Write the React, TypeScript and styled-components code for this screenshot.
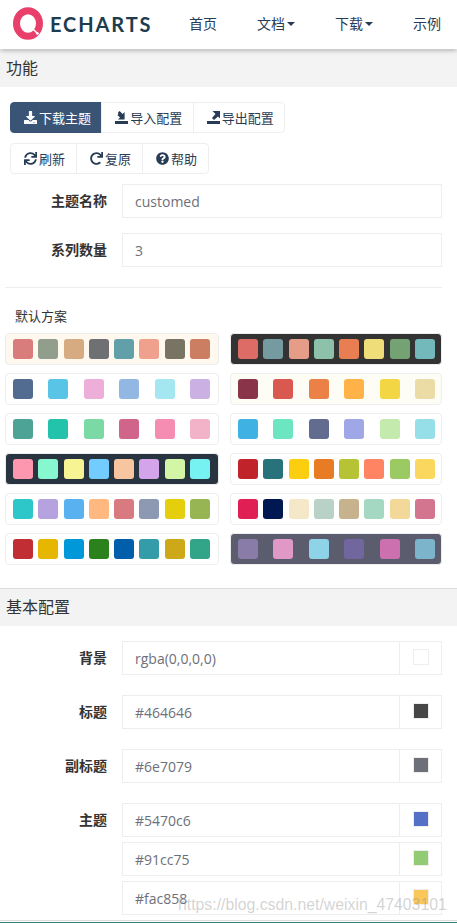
import React from 'react';
import styled, { createGlobalStyle } from 'styled-components';
import { FaDownload, FaQuestionCircle, FaRedo, FaSync } from 'react-icons/fa';

const GlobalStyle = createGlobalStyle`
    html, body {
        margin: 0;
        padding: 0;
        background: #fff;
    }
    body {
        font-family: "Open Sans", "Noto Sans CJK SC", sans-serif;
        font-size: 14px;
        color: #333;
    }
`;

const Page = styled.div`
    position: relative;
    width: 457px;
    height: 923px;
    overflow: hidden;
`;

const Navbar = styled.header`
    position: relative;
    z-index: 2;
    display: flex;
    align-items: center;
    height: 49px;
    background: #fff;
    box-shadow: 0 1px 5px rgba(0, 0, 0, 0.35);
`;

const Brand = styled.div`
    display: flex;
    align-items: center;
    gap: 6px;
    width: 169px;
    padding: 0 0 2px 12px;
    box-sizing: border-box;
    flex: none;
`;

const BrandName = styled.span`
    font-family: "Lato", "Liberation Sans", sans-serif;
    font-weight: 700;
    font-size: 20px;
    letter-spacing: 1.9px;
    color: #1d3c4e;
    line-height: 1;
`;

const NavList = styled.nav`
    display: flex;
    gap: 40px;
    padding: 0 0 3px 20px;
    white-space: nowrap;
`;

const NavItem = styled.span`
    display: flex;
    align-items: center;
    font-size: 14px;
    color: #293c55;
`;

const Caret = styled.i`
    width: 0;
    height: 0;
    margin: 2px 0 0 2px;
    border-top: 4px solid #293c55;
    border-left: 4px solid transparent;
    border-right: 4px solid transparent;
`;

const SectionTitle = styled.h2<{ $ruled?: boolean }>`
    margin: 0;
    height: 37px;
    padding-left: 6px;
    line-height: 37px;
    font-size: 16px;
    font-weight: 400;
    color: #333;
    background: #f3f3f3;
    border-top: ${(p) => (p.$ruled ? '1px solid #ddd' : 'none')};
    margin-top: ${(p) => (p.$ruled ? '23px' : '1px')};
`;

const Toolbar = styled.div`
    display: flex;
    flex-direction: column;
    align-items: flex-start;
    gap: 10px;
    padding: 15px 0 10px 10px;
`;

const ButtonGroup = styled.div`
    display: flex;
    height: 31px;
`;

const ToolButton = styled.button<{ $active?: boolean; $small?: boolean }>`
    display: flex;
    align-items: center;
    gap: 2px;
    height: 31px;
    margin: 0 0 0 -1px;
    padding: 0 ${(p) => (p.$small ? '11px' : '10.3px')} 0 13px;
    font-family: inherit;
    font-size: 13px;
    white-space: nowrap;
    color: ${(p) => (p.$active ? '#fff' : '#293c55')};
    background: ${(p) => (p.$active ? '#3a5476' : '#fff')};
    border: 1px solid ${(p) => (p.$active ? '#3a5476' : '#eee')};

    &:first-child {
        margin-left: 0;
        border-radius: 4px 0 0 4px;
    }
    &:last-child {
        border-radius: 0 4px 4px 0;
    }
    svg {
        width: 13px;
        height: 13px;
        flex: none;
    }
`;

const FormRow = styled.div<{ $wide?: boolean }>`
    display: grid;
    grid-template-columns: 107px 320px;
    column-gap: 15px;
    margin-bottom: ${(p) => (p.$wide ? '20px' : '15px')};
`;

const RowLabel = styled.label`
    font-weight: 700;
    font-size: 14px;
    line-height: 34px;
    text-align: right;
    color: #333;
`;

const FieldStack = styled.div`
    display: flex;
    flex-direction: column;
    gap: 5px;
`;

const Field = styled.div`
    display: flex;
    height: 34px;
    box-sizing: border-box;
    border: 1px solid #eee;
    background: #fff;
`;

const FieldText = styled.span`
    flex: 1;
    padding: 1px 0 0 12px;
    line-height: 32px;
    font-size: 14px;
    color: #6e7079;
`;

const ColorAddon = styled.span`
    display: flex;
    align-items: center;
    justify-content: center;
    width: 41px;
    flex: none;
    border-left: 1px solid #eee;
`;

const ColorChip = styled.i<{ $color: string }>`
    display: block;
    width: 14px;
    height: 14px;
    margin-top: -2px;
    background: ${(p) => p.$color};
    border: 1px solid #eee;
`;

const Divider = styled.hr`
    margin: 20px 15px 0 5px;
    border: 0;
    border-top: 1px solid #eee;
`;

const SchemeHeading = styled.div`
    padding: 19px 0 0 15px;
    height: 26px;
    font-size: 13px;
    line-height: 19px;
    color: #333;
`;

const SchemeGrid = styled.div`
    display: grid;
    grid-template-columns: 214px 212px;
    column-gap: 11px;
    row-gap: 8px;
    padding-left: 5px;
`;

const SchemeCard = styled.div<{ $bg: string }>`
    padding: 5px 0 5px 7px;
    border: 1px solid #eee;
    border-radius: 4px;
    background: ${(p) => p.$bg};
`;

const SwatchRow = styled.div`
    display: flex;
    justify-content: space-between;
    width: 197px;
`;

const Swatch = styled.i<{ $color: string }>`
    display: block;
    width: 20px;
    height: 20px;
    border-radius: 3px;
    background: ${(p) => p.$color};
`;

const ConfigList = styled.div`
    padding-top: 15px;
`;

const BottomEdge = styled.div`
    position: absolute;
    left: 0;
    right: 0;
    top: 920px;
    height: 3px;
    box-sizing: border-box;
    border-top: 1px solid #ddd;
    border-bottom: 1px solid #2f7f7b;
`;

const Watermark = styled.div`
    position: absolute;
    left: 178px;
    top: 894px;
    font-family: "Liberation Sans", sans-serif;
    font-size: 15.8px;
    line-height: 22px;
    white-space: nowrap;
    color: rgba(150, 150, 150, 0.42);
`;

const EchartsMark = () => (
    <svg width="32" height="34" viewBox="0 0 32 34">
        <ellipse cx="16" cy="16.500" rx="11.500" ry="12.800" fill="none" stroke="#e8406a" strokeWidth="7" />
        <path d="M21 22l5 5" stroke="#fff" strokeWidth="1.500" />
        <circle cx="25.500" cy="26.500" r="1.300" fill="#fff" />
    </svg>
);

const ImportIcon = () => (
    <svg viewBox="0 0 13 13" fill="currentColor">
        <path d="M0 10h13v3H0z" />
        <path d="M3 1.500l1.600-1.500 3 3 2-2V8.500H3l2-2-2.600-2.600 1-1z" />
    </svg>
);

const ExportIcon = () => (
    <svg viewBox="0 0 13 13" fill="currentColor">
        <path d="M0 10h13v3H0z" />
        <path d="M5.500 0H13v7.500l-2-2-4 3.500-2-2 3.500-4z" />
    </svg>
);

const schemes: { bg: string; colors: string[] }[] = [
    { bg: '#fef8ef', colors: ['#d87c7c', '#919e8b', '#d7ab82', '#6e7074', '#61a0a8', '#efa18d', '#787464', '#cc7e63'] },
    { bg: '#333333', colors: ['#dd6b66', '#759aa0', '#e69d87', '#8dc1a9', '#ea7e53', '#eedd78', '#73a373', '#73b9bc'] },
    { bg: '#ffffff', colors: ['#516b91', '#59c4e6', '#edafda', '#93b7e3', '#a5e7f0', '#cbb0e3'] },
    { bg: '#fdfcf5', colors: ['#893448', '#d95850', '#eb8146', '#ffb248', '#f2d643', '#ebdba4'] },
    { bg: '#ffffff', colors: ['#4ea397', '#22c3aa', '#7bd9a5', '#d0648a', '#f58db2', '#f2b3c9'] },
    { bg: '#ffffff', colors: ['#3fb1e3', '#6be6c1', '#626c91', '#a0a7e6', '#c4ebad', '#96dee8'] },
    { bg: '#293441', colors: ['#fc97af', '#87f7cf', '#f7f494', '#72ccff', '#f7c5a0', '#d4a4eb', '#d2f5a6', '#76f2f2'] },
    { bg: '#ffffff', colors: ['#c1232b', '#27727b', '#fcce10', '#e87c25', '#b5c334', '#fe8463', '#9bca63', '#fad860'] },
    { bg: '#ffffff', colors: ['#2ec7c9', '#b6a2de', '#5ab1ef', '#ffb980', '#d87a80', '#8d98b3', '#e5cf0d', '#97b552'] },
    { bg: '#ffffff', colors: ['#e01f54', '#001852', '#f5e8c8', '#b8d2c7', '#c6b38e', '#a4d8c2', '#f3d999', '#d3758f'] },
    { bg: '#ffffff', colors: ['#c12e34', '#e6b600', '#0098d9', '#2b821d', '#005eaa', '#339ca8', '#cda819', '#32a487'] },
    { bg: '#5b5c6e', colors: ['#8a7ca8', '#e098c7', '#8fd3e8', '#71669e', '#cc70af', '#7cb4cc'] },
];

const configRows: { label: string; values: { text: string; color: string }[] }[] = [
    { label: '背景', values: [{ text: 'rgba(0,0,0,0)', color: 'transparent' }] },
    { label: '标题', values: [{ text: '#464646', color: '#464646' }] },
    { label: '副标题', values: [{ text: '#6e7079', color: '#6e7079' }] },
    {
        label: '主题',
        values: [
            { text: '#5470c6', color: '#5470c6' },
            { text: '#91cc75', color: '#91cc75' },
            { text: '#fac858', color: '#fac858' },
        ],
    },
];

const App: React.FC = () => (
    <Page>
        <GlobalStyle />
        <Navbar>
            <Brand>
                <EchartsMark />
                <BrandName>ECHARTS</BrandName>
            </Brand>
            <NavList>
                <NavItem>首页</NavItem>
                <NavItem>文档<Caret /></NavItem>
                <NavItem>下载<Caret /></NavItem>
                <NavItem>示例</NavItem>
            </NavList>
        </Navbar>

        <SectionTitle>功能</SectionTitle>
        <Toolbar>
            <ButtonGroup>
                <ToolButton $active><FaDownload />下载主题</ToolButton>
                <ToolButton><ImportIcon />导入配置</ToolButton>
                <ToolButton><ExportIcon />导出配置</ToolButton>
            </ButtonGroup>
            <ButtonGroup>
                <ToolButton $small><FaSync />刷新</ToolButton>
                <ToolButton $small><FaRedo />复原</ToolButton>
                <ToolButton $small><FaQuestionCircle />帮助</ToolButton>
            </ButtonGroup>
        </Toolbar>

        <FormRow>
            <RowLabel>主题名称</RowLabel>
            <Field><FieldText>customed</FieldText></Field>
        </FormRow>
        <FormRow>
            <RowLabel>系列数量</RowLabel>
            <Field><FieldText>3</FieldText></Field>
        </FormRow>
        <Divider />
        <SchemeHeading>默认方案</SchemeHeading>
        <SchemeGrid>
            {schemes.map((scheme) => (
                <SchemeCard key={scheme.colors[0]} $bg={scheme.bg}>
                    <SwatchRow>
                        {scheme.colors.map((color) => (
                            <Swatch key={color} $color={color} />
                        ))}
                    </SwatchRow>
                </SchemeCard>
            ))}
        </SchemeGrid>

        <SectionTitle $ruled>基本配置</SectionTitle>
        <ConfigList>
            {configRows.map((row) => (
                <FormRow key={row.label} $wide>
                    <RowLabel>{row.label}</RowLabel>
                    <FieldStack>
                        {row.values.map((value) => (
                            <Field key={value.text}>
                                <FieldText>{value.text}</FieldText>
                                <ColorAddon><ColorChip $color={value.color} /></ColorAddon>
                            </Field>
                        ))}
                    </FieldStack>
                </FormRow>
            ))}
        </ConfigList>

        <Watermark>https://blog.csdn.net/weixin_47403101</Watermark>
        <BottomEdge />
    </Page>
);

export default App;
